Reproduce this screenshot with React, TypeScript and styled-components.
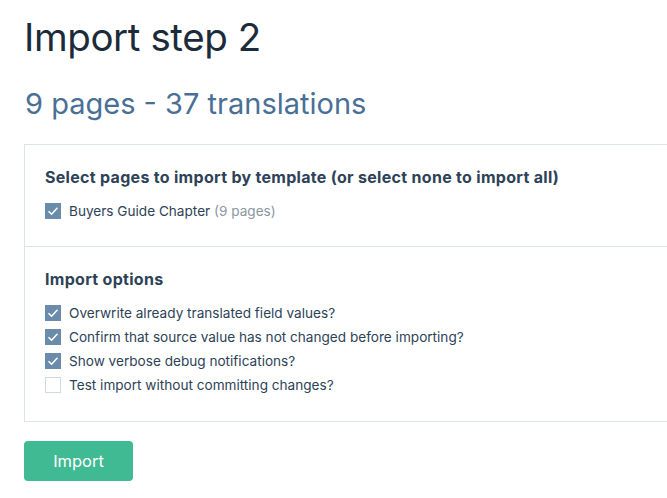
import styled, { createGlobalStyle } from "styled-components"

const Global = createGlobalStyle`
    html, body {
        margin: 0;
        background: #fff;
        overflow: hidden;
    }
    body {
        font-family: Inter, "Noto Sans", sans-serif;
        color: #2c3e50;
    }
`

const Page = styled.div`
    padding: 14px 0 0 24px;
    width: 643px;
    overflow: hidden;
`
const Title = styled.h1`
    margin: 0;
    font-size: 38.5px;
    font-weight: 400;
    line-height: 46px;
    color: #1c2b3a;
    letter-spacing: -0.4px;
`
const Subtitle = styled.h2`
    margin: 26px 0 0 1px;
    font-size: 29px;
    font-weight: 400;
    line-height: 36px;
    color: #4a6f96;
`
const Panel = styled.div`
    margin-top: 22px;
    width: 700px;
    border: 1px solid #dbe3eb;
    border-right: 0;
`
const Section = styled.section`
    padding: 21px 20px 23px;
    & + & {
        border-top: 1px solid #dbe3eb;
        padding-top: 21px;
        padding-bottom: 24px;
    }
`
const Heading = styled.h3`
    margin: 0 0 11px;
    font-size: 16px;
    font-weight: 700;
    line-height: 22px;
    letter-spacing: 0.3px;
    color: #2d4257;
`
const Option = styled.label`
    display: flex;
    align-items: center;
    gap: 8px;
    height: 24px;
    font-size: 13.6px;
    color: #2d4257;
`
const Box = styled.span<{ $checked?: boolean }>`
    width: 16px;
    height: 16px;
    box-sizing: border-box;
    display: inline-flex;
    align-items: center;
    justify-content: center;
    background: ${p => (p.$checked ? "#6b8bab" : "#fff")};
    border: 1px solid ${p => (p.$checked ? "#6b8bab" : "#d2d8de")};
    flex-shrink: 0;
`
const Muted = styled.span`
    color: #8a96a2;
`
const Button = styled.button`
    margin-top: 19px;
    width: 109px;
    height: 40px;
    border: 0;
    border-radius: 4px;
    background: #3fba93;
    color: #fff;
    font-family: Inter, "Noto Sans", sans-serif;
    font-size: 16.5px;
    cursor: pointer;
`

const Check = ({ checked }: { checked?: boolean }) => (
    <Box $checked={checked}>
        {checked && (
            <svg width="12" height="10" viewBox="0 0 12 10">
                <path d="M1.5 5.2 L4.6 8.2 L10.5 1.8" fill="none" stroke="#fff" strokeWidth="1.6" />
            </svg>
        )}
    </Box>
)

const options = [
    { label: "Overwrite already translated field values?", checked: true },
    { label: "Confirm that source value has not changed before importing?", checked: true },
    { label: "Show verbose debug notifications?", checked: true },
    { label: "Test import without committing changes?", checked: false },
]

const App = () => {
    return (
        <Page>
            <Global />
            <Title>Import step 2</Title>
            <Subtitle>9 pages - 37 translations</Subtitle>
            <Panel>
                <Section>
                    <Heading>Select pages to import by template (or select none to import all)</Heading>
                    <Option>
                        <Check checked />
                        <span>Buyers Guide Chapter <Muted>(9 pages)</Muted></span>
                    </Option>
                </Section>
                <Section>
                    <Heading>Import options</Heading>
                    {options.map(o => (
                        <Option key={o.label}>
                            <Check checked={o.checked} />
                            {o.label}
                        </Option>
                    ))}
                </Section>
            </Panel>
            <Button>Import</Button>
        </Page>
    )
}

export default App
